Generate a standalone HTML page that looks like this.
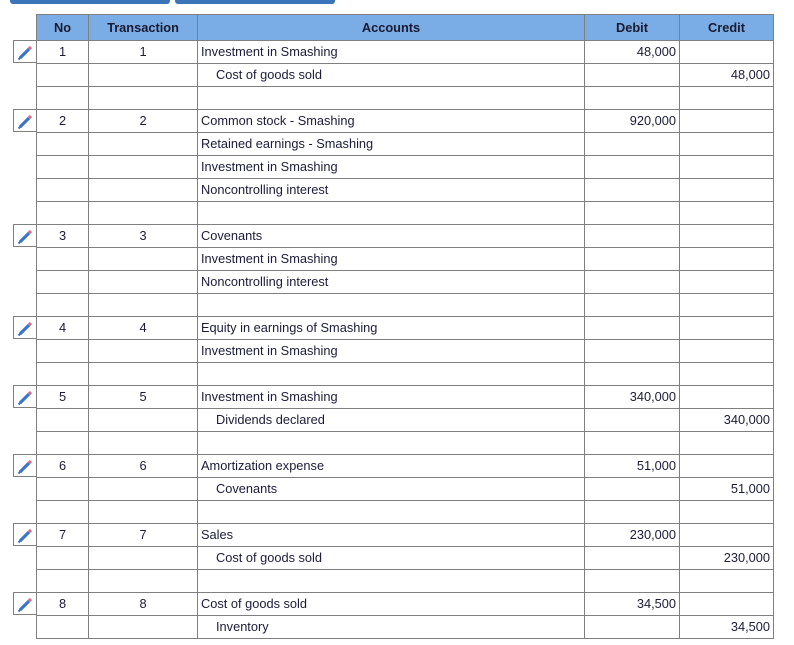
<!DOCTYPE html>
<html><head><meta charset="utf-8"><style>
body{margin:0;width:794px;height:645px;background:#fff;position:relative;overflow:hidden;font-family:"Liberation Sans",Arial,sans-serif;}
.bar{position:absolute;top:-4px;height:8px;background:#3b74b8;border-radius:3px;}
table{position:absolute;left:36px;top:14px;border-collapse:collapse;table-layout:fixed;}
td,th{border:1px solid #7f7f7f;padding:0 3px;font-size:12.8px;color:#1b1b3a;line-height:15px;vertical-align:top;padding-top:3px;box-sizing:border-box;white-space:nowrap;overflow:hidden}
th{background:#7aade6;height:26px;font-weight:bold;vertical-align:middle;padding-top:0;color:#1a1a30}
td{height:23px}
.c{text-align:center}.r{text-align:right}.i{padding-left:18px}
.p{position:absolute;left:13px;width:23px;height:23px;border:1px solid #7f7f7f;border-right:none;box-sizing:border-box;background:#fff}
</style></head><body>
<div class="bar" style="left:10px;width:160px"></div>
<div class="bar" style="left:175px;width:160px"></div>
<table>
<colgroup><col style="width:52px"><col style="width:109px"><col style="width:387px"><col style="width:95px"><col style="width:94px"></colgroup>
<tr><th>No</th><th>Transaction</th><th>Accounts</th><th>Debit</th><th>Credit</th></tr>
<tr><td class="c">1</td><td class="c">1</td><td>Investment in Smashing</td><td class="r">48,000</td><td></td></tr>
<tr><td></td><td></td><td class="i">Cost of goods sold</td><td></td><td class="r">48,000</td></tr>
<tr><td></td><td></td><td></td><td></td><td></td></tr>
<tr><td class="c">2</td><td class="c">2</td><td>Common stock - Smashing</td><td class="r">920,000</td><td></td></tr>
<tr><td></td><td></td><td>Retained earnings - Smashing</td><td></td><td></td></tr>
<tr><td></td><td></td><td>Investment in Smashing</td><td></td><td></td></tr>
<tr><td></td><td></td><td>Noncontrolling interest</td><td></td><td></td></tr>
<tr><td></td><td></td><td></td><td></td><td></td></tr>
<tr><td class="c">3</td><td class="c">3</td><td>Covenants</td><td></td><td></td></tr>
<tr><td></td><td></td><td>Investment in Smashing</td><td></td><td></td></tr>
<tr><td></td><td></td><td>Noncontrolling interest</td><td></td><td></td></tr>
<tr><td></td><td></td><td></td><td></td><td></td></tr>
<tr><td class="c">4</td><td class="c">4</td><td>Equity in earnings of Smashing</td><td></td><td></td></tr>
<tr><td></td><td></td><td>Investment in Smashing</td><td></td><td></td></tr>
<tr><td></td><td></td><td></td><td></td><td></td></tr>
<tr><td class="c">5</td><td class="c">5</td><td>Investment in Smashing</td><td class="r">340,000</td><td></td></tr>
<tr><td></td><td></td><td class="i">Dividends declared</td><td></td><td class="r">340,000</td></tr>
<tr><td></td><td></td><td></td><td></td><td></td></tr>
<tr><td class="c">6</td><td class="c">6</td><td>Amortization expense</td><td class="r">51,000</td><td></td></tr>
<tr><td></td><td></td><td class="i">Covenants</td><td></td><td class="r">51,000</td></tr>
<tr><td></td><td></td><td></td><td></td><td></td></tr>
<tr><td class="c">7</td><td class="c">7</td><td>Sales</td><td class="r">230,000</td><td></td></tr>
<tr><td></td><td></td><td class="i">Cost of goods sold</td><td></td><td class="r">230,000</td></tr>
<tr><td></td><td></td><td></td><td></td><td></td></tr>
<tr><td class="c">8</td><td class="c">8</td><td>Cost of goods sold</td><td class="r">34,500</td><td></td></tr>
<tr><td></td><td></td><td class="i">Inventory</td><td></td><td class="r">34,500</td></tr>
</table>
<svg width="0" height="0" style="position:absolute"><defs><g id="pen"><path d="M6 17 L15 8" stroke="#3b74c8" stroke-width="3.2" stroke-linecap="butt"/><path d="M15 8 L17 6" stroke="#e06a8a" stroke-width="3.2"/><path d="M4.5 18.5 L6.5 16.5" stroke="#3b74c8" stroke-width="2"/></g></defs></svg>
<div class="p" style="top:40px"><svg width="23" height="23"><use href="#pen"/></svg></div>
<div class="p" style="top:109px"><svg width="23" height="23"><use href="#pen"/></svg></div>
<div class="p" style="top:224px"><svg width="23" height="23"><use href="#pen"/></svg></div>
<div class="p" style="top:316px"><svg width="23" height="23"><use href="#pen"/></svg></div>
<div class="p" style="top:385px"><svg width="23" height="23"><use href="#pen"/></svg></div>
<div class="p" style="top:454px"><svg width="23" height="23"><use href="#pen"/></svg></div>
<div class="p" style="top:523px"><svg width="23" height="23"><use href="#pen"/></svg></div>
<div class="p" style="top:592px"><svg width="23" height="23"><use href="#pen"/></svg></div>
</body></html>
